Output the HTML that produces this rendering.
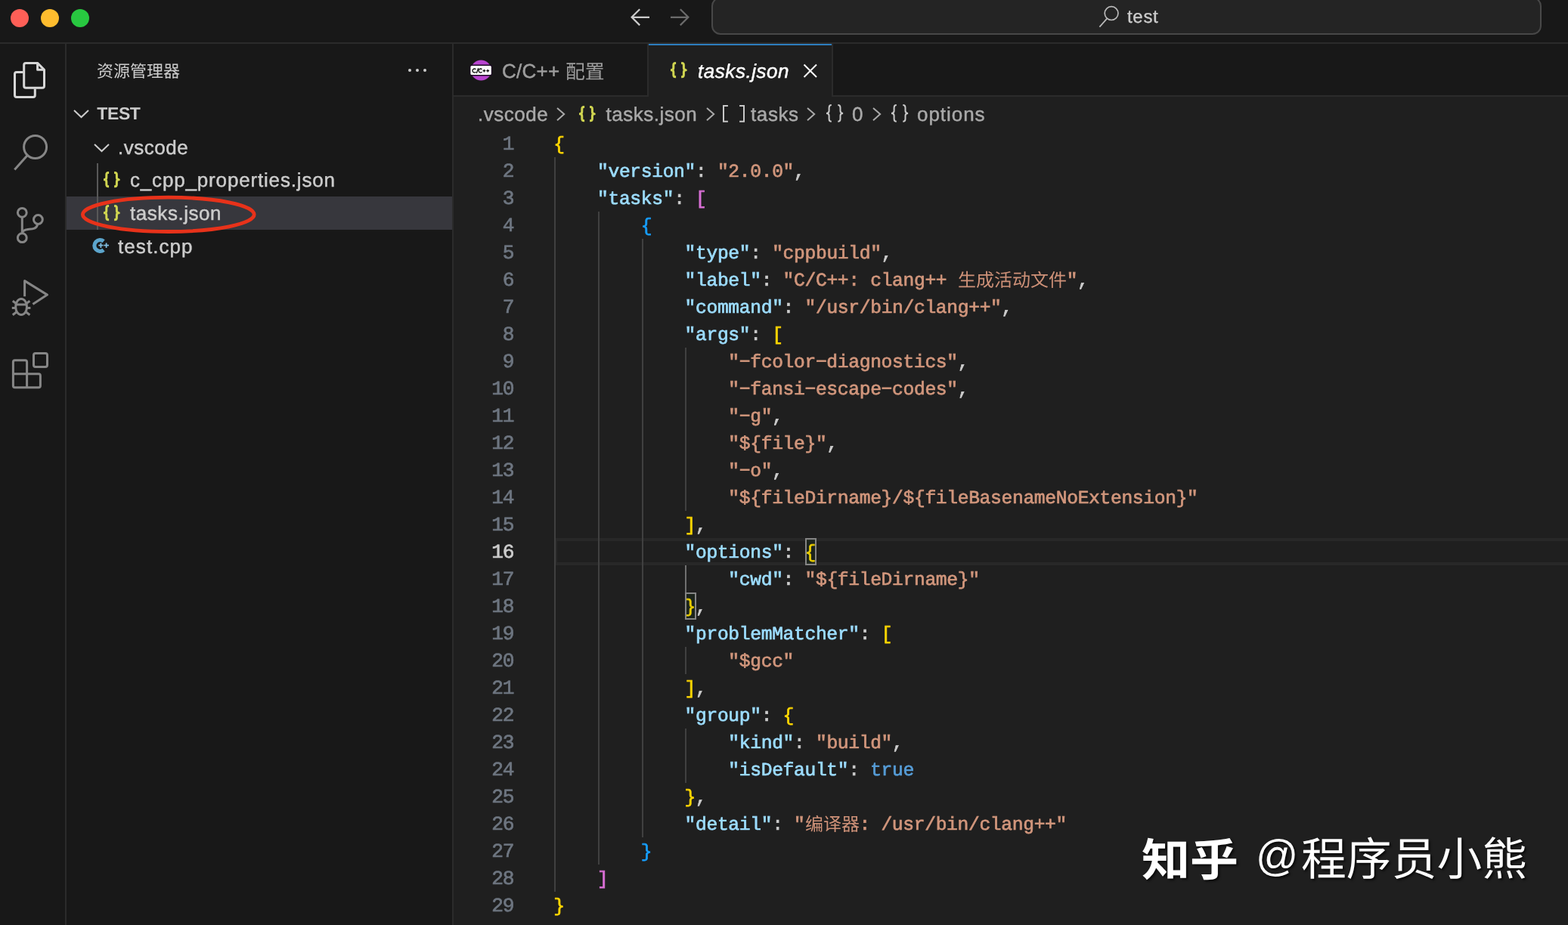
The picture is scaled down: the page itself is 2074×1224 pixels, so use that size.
<!DOCTYPE html>
<html><head><meta charset="utf-8"><title>tasks.json - test</title>
<style>
html,body{margin:0;padding:0}
body{width:2074px;height:1224px;overflow:hidden;position:relative;background:#1f1f1f;font-family:"Liberation Sans",sans-serif;color:#ccc;text-rendering:geometricPrecision;-webkit-font-smoothing:antialiased}
.abs{position:absolute}
.t{position:absolute;white-space:pre;line-height:1}
.ui{font-family:"Liberation Sans",sans-serif;font-size:26px;color:#ccc;-webkit-text-stroke-width:0.45px}
.code{font-family:"Liberation Mono",monospace;font-size:24.6px;letter-spacing:-0.312px;-webkit-text-stroke-width:0.7px;margin-top:2.7px;line-height:36px;height:36px;white-space:pre;position:absolute;left:732.2px;color:#ccc}
.ln{font-family:"Liberation Mono",monospace;font-size:26.2px;letter-spacing:-1.27px;-webkit-text-stroke-width:0.7px;margin-top:0.8px;line-height:36px;height:36px;position:absolute;left:600px;width:79.1px;text-align:right;color:#6e7681}
.k{color:#9cdcfe}.s{color:#d1967c}.b{color:#569cd6}
.b1{color:#ffd700}.b2{color:#da70d6}.b3{color:#179fff}
.g{position:absolute;width:2px;background:#404040}
.ga{background:#707070}
</style></head><body>
<div id="root" style="position:absolute;left:0;top:0;width:2074px;height:1224px;overflow:hidden;will-change:transform">

<div class="abs" style="left:0;top:0;width:2074px;height:56px;background:#181818"></div>
<div class="abs" style="left:0;top:56px;width:2074px;height:2px;background:#2b2b2b"></div>
<div class="abs" style="left:14px;top:12px;width:24px;height:24px;border-radius:50%;background:#fe5f57"></div>
<div class="abs" style="left:54px;top:12px;width:24px;height:24px;border-radius:50%;background:#febc2e"></div>
<div class="abs" style="left:94px;top:12px;width:24px;height:24px;border-radius:50%;background:#28c840"></div>
<svg class="abs" style="left:830px;top:8px" width="90" height="30" viewBox="0 0 90 30" fill="none" stroke-width="2.2" stroke-linecap="butt" stroke-linejoin="miter"><path stroke="#cccccc" d="M29 14.8H6M16.2 4.2L5.6 14.8L16.2 25.4"/><path stroke="#6b6b6b" d="M57 14.8H80M69.8 4.2L80.4 14.8L69.8 25.4"/></svg>
<div class="abs" style="left:941px;top:-4px;width:1094px;height:46px;border:2px solid #484848;border-radius:12px;background:#242424"></div>
<svg class="abs" style="left:1450px;top:4px" width="34" height="36" viewBox="0 0 34 36" fill="none" stroke="#b9b9b9" stroke-width="1.7"><circle cx="20.1" cy="13.6" r="8.9"/><path d="M14.4 20.4L4.4 31.6"/></svg>
<div class="t" style="left:1491px;top:11px;font-size:24px;letter-spacing:0.7px;color:#ccc;-webkit-text-stroke-width:0.35px">test</div>
<div class="abs" style="left:0;top:58px;width:86px;height:1166px;background:#181818"></div>
<div class="abs" style="left:86px;top:58px;width:2px;height:1166px;background:#2b2b2b"></div>
<svg class="abs" style="left:0;top:58px" width="86" height="480" viewBox="0 58 86 480" fill="none" stroke-width="3" stroke-linejoin="round" stroke-linecap="butt"><g stroke="#d7d7d7"><path d="M49.6 83.4H34.2Q31.7 83.4 31.7 85.9V113.8Q31.7 116.3 34.2 116.3H56Q58.5 116.3 58.5 113.8V92.2Z"/><path d="M49.6 83.4V92.2H58.5"/><path d="M30.5 95.5H22Q19.5 95.5 19.5 98V126Q19.5 128.5 22 128.5H43.8Q46.3 128.5 46.3 126V117.5"/></g><g stroke="#868686"><circle cx="46.6" cy="194.5" r="15"/><path d="M36.3 205.4L19.3 224.6"/></g><g stroke="#868686"><circle cx="29.3" cy="281.3" r="5.9"/><circle cx="50.4" cy="290.5" r="5.9"/><circle cx="29.3" cy="314.7" r="5.9"/><path d="M29.3 287.2V308.8"/><path d="M49.8 296.4C48.5 303.5 42 303 37 303.4C32 303.8 29.6 306 29.3 308.8"/></g><g stroke="#868686"><path d="M32.6 392.3V371.6L62.5 390.1L43.4 402.6"/><ellipse cx="28.1" cy="406" rx="7.4" ry="10.6"/><path d="M20.9 403H35.3"/><path d="M16.8 398.3L21.6 401.8M15.8 407.5H20.8M16.8 416.7L21.6 413M39.4 398.3L34.6 401.8M40.4 407.5H35.4M39.4 416.7L34.6 413"/></g><g stroke="#868686"><rect x="44.5" y="467.5" width="18" height="18" rx="2.5"/><path d="M20 476.7H33.4Q35.6 476.7 35.6 479V494.7H51.2Q53.4 494.7 53.4 497V510.5Q53.4 512.7 51.2 512.7H19.6Q17.4 512.7 17.4 510.5V479Q17.4 476.7 19.6 476.7Z"/><path d="M35.6 494.7V512.7M17.4 494.7H35.6"/></g></svg>
<div class="abs" style="left:88px;top:58px;width:510px;height:1166px;background:#181818"></div>
<div class="abs" style="left:598px;top:58px;width:2px;height:1166px;background:#2b2b2b"></div>
<svg class="abs" style="left:128.4px;top:80.0px;" width="110.0" height="30.8" viewBox="0 -22.0 110.0 30.8"><text x="0" y="0" font-size="22" fill="#cccccc" font-family="'Liberation Sans','Noto Sans CJK SC',sans-serif">资源管理器</text></svg>
<div class="abs" style="left:539.8px;top:90.6px;width:4.4px;height:4.4px;border-radius:50%;background:#ccc"></div>
<div class="abs" style="left:549.8px;top:90.6px;width:4.4px;height:4.4px;border-radius:50%;background:#ccc"></div>
<div class="abs" style="left:559.8px;top:90.6px;width:4.4px;height:4.4px;border-radius:50%;background:#ccc"></div>
<div class="abs" style="left:88px;top:260px;width:510px;height:44px;background:#37373d"></div>
<svg class="abs" style="left:96.4px;top:144.4px" width="23" height="13" viewBox="-2 -2 23 13" fill="none" stroke="#cccccc" stroke-width="2"><path d="M0 0L9.5 9L19 0"/></svg>
<svg class="abs" style="left:122.6px;top:188.5px" width="23" height="13" viewBox="-2 -2 23 13" fill="none" stroke="#cccccc" stroke-width="2"><path d="M0 0L9.5 9L19 0"/></svg>
<div class="t" style="left:128.3px;top:138.9px;font-size:23px;font-weight:bold;letter-spacing:-0.4px;color:#ccc">TEST</div>
<div class="t ui" style="left:156px;top:181.5px;letter-spacing:0.5px">.vscode</div>
<div class="abs" style="left:128px;top:216px;width:2px;height:88px;background:#585858"></div>
<svg class="abs" style="left:136.9px;top:226.7px" width="22" height="22" viewBox="0 0 22 22" fill="none" stroke="#cfd450" stroke-width="3.0" stroke-linejoin="round"><path d="M7.1 1.5H6.3C4.4 1.5 3.8 2.6 3.8 4.2V7.8C3.8 9.6 2.8 10.65 0.9 10.65C2.8 10.65 3.8 11.7 3.8 13.5V17.1C3.8 18.7 4.4 19.8 6.3 19.8H7.1"/><path transform="translate(21.2 0) scale(-1 1)" d="M7.1 1.5H6.3C4.4 1.5 3.8 2.6 3.8 4.2V7.8C3.8 9.6 2.8 10.65 0.9 10.65C2.8 10.65 3.8 11.7 3.8 13.5V17.1C3.8 18.7 4.4 19.8 6.3 19.8H7.1"/></svg>
<div class="t ui" style="left:172px;top:225px;letter-spacing:0.83px">c_cpp_properties.json</div>
<svg class="abs" style="left:136.9px;top:270.7px" width="22" height="22" viewBox="0 0 22 22" fill="none" stroke="#cfd450" stroke-width="3.0" stroke-linejoin="round"><path d="M7.1 1.5H6.3C4.4 1.5 3.8 2.6 3.8 4.2V7.8C3.8 9.6 2.8 10.65 0.9 10.65C2.8 10.65 3.8 11.7 3.8 13.5V17.1C3.8 18.7 4.4 19.8 6.3 19.8H7.1"/><path transform="translate(21.2 0) scale(-1 1)" d="M7.1 1.5H6.3C4.4 1.5 3.8 2.6 3.8 4.2V7.8C3.8 9.6 2.8 10.65 0.9 10.65C2.8 10.65 3.8 11.7 3.8 13.5V17.1C3.8 18.7 4.4 19.8 6.3 19.8H7.1"/></svg>
<div class="t ui" style="left:172px;top:269px;letter-spacing:0.55px">tasks.json</div>
<div class="t ui" style="left:156px;top:313px;letter-spacing:1.07px">test.cpp</div>
<svg class="abs" style="left:118px;top:311px" width="30" height="28" viewBox="118 311 30 28" fill="none"><path d="M137.1 319.3A7.45 7.45 0 1 0 137.1 330.7" stroke="#5ca5cc" stroke-width="5.1"/><path d="M130.3 324.7H136.5M133.4 321.4V328M137.3 324.7H144M140.6 321.4V328" stroke="#7fbde0" stroke-width="1.8"/></svg>
<svg class="abs" style="left:100px;top:254px" width="246" height="60" viewBox="100 254 246 60" fill="none"><ellipse cx="222.8" cy="283.85" rx="113.4" ry="22.65" stroke="#e8321a" stroke-width="4.8"/></svg>
<div class="abs" style="left:600px;top:58px;width:1474px;height:68px;background:#181818"></div>
<div class="abs" style="left:600px;top:126px;width:1474px;height:2px;background:#2b2b2b"></div>
<div class="abs" style="left:856px;top:58px;width:2px;height:68px;background:#2b2b2b"></div>
<div class="abs" style="left:858px;top:58px;width:242px;height:70px;background:#1f1f1f"></div>
<div class="abs" style="left:858px;top:58px;width:242px;height:2px;background:#2d7dbd"></div>
<div class="abs" style="left:1100px;top:58px;width:2px;height:68px;background:#2b2b2b"></div>
<svg class="abs" style="left:618px;top:76px" width="36" height="34" viewBox="618 76 36 34"><circle cx="636.3" cy="93" r="13.6" fill="#b845d0"/><rect x="621.4" y="85.5" width="29.4" height="15" rx="2.2" fill="#1c0a24"/><rect x="622.4" y="86.9" width="27.4" height="12.1" rx="1.6" fill="#ffffff"/><path fill="none" stroke="#111" stroke-width="1.35" d="M629.4 91.7A2.55 2.55 0 1 0 629.4 95.3M632.7 90.1L630.3 97M637.5 91.7A2.55 2.55 0 1 0 637.5 95.3M638.5 93.6H642.3M640.4 91.7V95.5M643.3 93.6H647.1M645.2 91.7V95.5"/></svg>
<div class="t ui" style="left:664px;top:81px;color:#9d9d9d;letter-spacing:0.25px">C/C++</div>
<svg class="abs" style="left:748px;top:77.8px;" width="51.6" height="36.1" viewBox="0 -25.8 51.6 36.1"><text x="0" y="0" font-size="25.8" fill="#9d9d9d" font-family="'Liberation Sans','Noto Sans CJK SC',sans-serif">配置</text></svg>
<svg class="abs" style="left:886.9px;top:82.1px" width="22" height="22" viewBox="0 0 22 22" fill="none" stroke="#cfd450" stroke-width="3.0" stroke-linejoin="round"><path d="M7.1 1.5H6.3C4.4 1.5 3.8 2.6 3.8 4.2V7.8C3.8 9.6 2.8 10.65 0.9 10.65C2.8 10.65 3.8 11.7 3.8 13.5V17.1C3.8 18.7 4.4 19.8 6.3 19.8H7.1"/><path transform="translate(21.2 0) scale(-1 1)" d="M7.1 1.5H6.3C4.4 1.5 3.8 2.6 3.8 4.2V7.8C3.8 9.6 2.8 10.65 0.9 10.65C2.8 10.65 3.8 11.7 3.8 13.5V17.1C3.8 18.7 4.4 19.8 6.3 19.8H7.1"/></svg>
<div class="t ui" style="left:923px;top:81px;color:#fff;font-style:italic;letter-spacing:0.55px">tasks.json</div>
<svg class="abs" style="left:1060px;top:82px" width="24" height="24" viewBox="0 0 24 24" fill="none" stroke="#fff" stroke-width="2"><path d="M3.5 3.5L20 20M20 3.5L3.5 20"/></svg>
<div class="t ui" style="left:632px;top:137.5px;color:#a9a9a9;letter-spacing:0.5px">.vscode</div>
<svg class="abs" style="left:735.1999999999999px;top:140.70000000000002px" width="13.2" height="20.2" viewBox="-2 -2 13.2 20.2" fill="none" stroke="#a9a9a9" stroke-width="2"><path d="M0 0L9.2 8.1L0 16.2"/></svg>
<svg class="abs" style="left:766px;top:140.1px" width="22" height="22" viewBox="0 0 22 22" fill="none" stroke="#cfd450" stroke-width="3.0" stroke-linejoin="round"><path d="M7.1 1.5H6.3C4.4 1.5 3.8 2.6 3.8 4.2V7.8C3.8 9.6 2.8 10.65 0.9 10.65C2.8 10.65 3.8 11.7 3.8 13.5V17.1C3.8 18.7 4.4 19.8 6.3 19.8H7.1"/><path transform="translate(21.2 0) scale(-1 1)" d="M7.1 1.5H6.3C4.4 1.5 3.8 2.6 3.8 4.2V7.8C3.8 9.6 2.8 10.65 0.9 10.65C2.8 10.65 3.8 11.7 3.8 13.5V17.1C3.8 18.7 4.4 19.8 6.3 19.8H7.1"/></svg>
<div class="t ui" style="left:801.5px;top:137.5px;color:#a9a9a9;letter-spacing:0.5px">tasks.json</div>
<svg class="abs" style="left:932.5px;top:140.70000000000002px" width="13.2" height="20.2" viewBox="-2 -2 13.2 20.2" fill="none" stroke="#a9a9a9" stroke-width="2"><path d="M0 0L9.2 8.1L0 16.2"/></svg>
<svg class="abs" style="left:955.7px;top:138.5px" width="30" height="24" viewBox="0 0 30 24" fill="none" stroke="#c8c8c8" stroke-width="2"><path d="M6.9 1H1V21.7H6.9M22.1 1H28V21.7H22.1"/></svg>
<div class="t ui" style="left:993px;top:137.5px;color:#a9a9a9;letter-spacing:0.6px">tasks</div>
<svg class="abs" style="left:1066.1000000000001px;top:140.70000000000002px" width="13.2" height="20.2" viewBox="-2 -2 13.2 20.2" fill="none" stroke="#a9a9a9" stroke-width="2"><path d="M0 0L9.2 8.1L0 16.2"/></svg>
<svg class="abs" style="left:1092.1px;top:138.1px" width="26" height="24" viewBox="0 0 26 24" fill="none" stroke="#c8c8c8" stroke-width="2"><path d="M7.8 1C5.2 1 4.6 2.2 4.6 4.4V8.8C4.6 10.8 3.4 11.9 1 11.9C3.4 11.9 4.6 13 4.6 15V19.4C4.6 21.6 5.2 22.8 7.8 22.8"/><path transform="translate(24.1 0) scale(-1 1)" d="M7.8 1C5.2 1 4.6 2.2 4.6 4.4V8.8C4.6 10.8 3.4 11.9 1 11.9C3.4 11.9 4.6 13 4.6 15V19.4C4.6 21.6 5.2 22.8 7.8 22.8"/></svg>
<div class="t ui" style="left:1127px;top:137.5px;color:#a9a9a9;">0</div>
<svg class="abs" style="left:1152.7px;top:140.70000000000002px" width="13.2" height="20.2" viewBox="-2 -2 13.2 20.2" fill="none" stroke="#a9a9a9" stroke-width="2"><path d="M0 0L9.2 8.1L0 16.2"/></svg>
<svg class="abs" style="left:1178px;top:138.1px" width="26" height="24" viewBox="0 0 26 24" fill="none" stroke="#c8c8c8" stroke-width="2"><path d="M7.8 1C5.2 1 4.6 2.2 4.6 4.4V8.8C4.6 10.8 3.4 11.9 1 11.9C3.4 11.9 4.6 13 4.6 15V19.4C4.6 21.6 5.2 22.8 7.8 22.8"/><path transform="translate(24.1 0) scale(-1 1)" d="M7.8 1C5.2 1 4.6 2.2 4.6 4.4V8.8C4.6 10.8 3.4 11.9 1 11.9C3.4 11.9 4.6 13 4.6 15V19.4C4.6 21.6 5.2 22.8 7.8 22.8"/></svg>
<div class="t ui" style="left:1213px;top:137.5px;color:#a9a9a9;letter-spacing:0.95px">options</div>
<div class="abs" style="left:733px;top:712px;width:1341px;height:28px;border:4px solid #282828;border-right:none"></div>
<div class="ln" style="top:172px">1</div>
<div class="code" style="top:172px"><span class="b1">{</span></div>
<div class="ln" style="top:208px">2</div>
<div class="g" style="left:733.0px;top:208px;height:36px"></div>
<div class="code" style="top:208px">    <span class="k">&quot;version&quot;</span>: <span class="s">&quot;2.0.0&quot;</span>,</div>
<div class="ln" style="top:244px">3</div>
<div class="g" style="left:733.0px;top:244px;height:36px"></div>
<div class="code" style="top:244px">    <span class="k">&quot;tasks&quot;</span>: <span class="b2">[</span></div>
<div class="ln" style="top:280px">4</div>
<div class="g" style="left:733.0px;top:280px;height:36px"></div>
<div class="g" style="left:790.8px;top:280px;height:36px"></div>
<div class="code" style="top:280px">        <span class="b3">{</span></div>
<div class="ln" style="top:316px">5</div>
<div class="g" style="left:733.0px;top:316px;height:36px"></div>
<div class="g" style="left:790.8px;top:316px;height:36px"></div>
<div class="g" style="left:848.6px;top:316px;height:36px"></div>
<div class="code" style="top:316px">            <span class="k">&quot;type&quot;</span>: <span class="s">&quot;cppbuild&quot;</span>,</div>
<div class="ln" style="top:352px">6</div>
<div class="g" style="left:733.0px;top:352px;height:36px"></div>
<div class="g" style="left:790.8px;top:352px;height:36px"></div>
<div class="g" style="left:848.6px;top:352px;height:36px"></div>
<div class="code" style="top:352px">            <span class="k">&quot;label&quot;</span>: <span class="s">&quot;C/C++: clang++ </span><span style="display:inline-block;width:144px"></span><span class="s">&quot;</span>,</div>
<div class="ln" style="top:388px">7</div>
<div class="g" style="left:733.0px;top:388px;height:36px"></div>
<div class="g" style="left:790.8px;top:388px;height:36px"></div>
<div class="g" style="left:848.6px;top:388px;height:36px"></div>
<div class="code" style="top:388px">            <span class="k">&quot;command&quot;</span>: <span class="s">&quot;/usr/bin/clang++&quot;</span>,</div>
<div class="ln" style="top:424px">8</div>
<div class="g" style="left:733.0px;top:424px;height:36px"></div>
<div class="g" style="left:790.8px;top:424px;height:36px"></div>
<div class="g" style="left:848.6px;top:424px;height:36px"></div>
<div class="code" style="top:424px">            <span class="k">&quot;args&quot;</span>: <span class="b1">[</span></div>
<div class="ln" style="top:460px">9</div>
<div class="g" style="left:733.0px;top:460px;height:36px"></div>
<div class="g" style="left:790.8px;top:460px;height:36px"></div>
<div class="g" style="left:848.6px;top:460px;height:36px"></div>
<div class="g" style="left:906.4px;top:460px;height:36px"></div>
<div class="code" style="top:460px">                <span class="s">&quot;−fcolor−diagnostics&quot;</span>,</div>
<div class="ln" style="top:496px">10</div>
<div class="g" style="left:733.0px;top:496px;height:36px"></div>
<div class="g" style="left:790.8px;top:496px;height:36px"></div>
<div class="g" style="left:848.6px;top:496px;height:36px"></div>
<div class="g" style="left:906.4px;top:496px;height:36px"></div>
<div class="code" style="top:496px">                <span class="s">&quot;−fansi−escape−codes&quot;</span>,</div>
<div class="ln" style="top:532px">11</div>
<div class="g" style="left:733.0px;top:532px;height:36px"></div>
<div class="g" style="left:790.8px;top:532px;height:36px"></div>
<div class="g" style="left:848.6px;top:532px;height:36px"></div>
<div class="g" style="left:906.4px;top:532px;height:36px"></div>
<div class="code" style="top:532px">                <span class="s">&quot;−g&quot;</span>,</div>
<div class="ln" style="top:568px">12</div>
<div class="g" style="left:733.0px;top:568px;height:36px"></div>
<div class="g" style="left:790.8px;top:568px;height:36px"></div>
<div class="g" style="left:848.6px;top:568px;height:36px"></div>
<div class="g" style="left:906.4px;top:568px;height:36px"></div>
<div class="code" style="top:568px">                <span class="s">&quot;${file}&quot;</span>,</div>
<div class="ln" style="top:604px">13</div>
<div class="g" style="left:733.0px;top:604px;height:36px"></div>
<div class="g" style="left:790.8px;top:604px;height:36px"></div>
<div class="g" style="left:848.6px;top:604px;height:36px"></div>
<div class="g" style="left:906.4px;top:604px;height:36px"></div>
<div class="code" style="top:604px">                <span class="s">&quot;−o&quot;</span>,</div>
<div class="ln" style="top:640px">14</div>
<div class="g" style="left:733.0px;top:640px;height:36px"></div>
<div class="g" style="left:790.8px;top:640px;height:36px"></div>
<div class="g" style="left:848.6px;top:640px;height:36px"></div>
<div class="g" style="left:906.4px;top:640px;height:36px"></div>
<div class="code" style="top:640px">                <span class="s">&quot;${fileDirname}/${fileBasenameNoExtension}&quot;</span></div>
<div class="ln" style="top:676px">15</div>
<div class="g" style="left:733.0px;top:676px;height:36px"></div>
<div class="g" style="left:790.8px;top:676px;height:36px"></div>
<div class="g" style="left:848.6px;top:676px;height:36px"></div>
<div class="code" style="top:676px">            <span class="b1">]</span>,</div>
<div class="ln" style="top:712px;color:#cccccc">16</div>
<div class="g" style="left:733.0px;top:712px;height:36px"></div>
<div class="g" style="left:790.8px;top:712px;height:36px"></div>
<div class="g" style="left:848.6px;top:712px;height:36px"></div>
<div class="code" style="top:712px">            <span class="k">&quot;options&quot;</span>: <span class="b1">{</span></div>
<div class="ln" style="top:748px">17</div>
<div class="g" style="left:733.0px;top:748px;height:36px"></div>
<div class="g" style="left:790.8px;top:748px;height:36px"></div>
<div class="g" style="left:848.6px;top:748px;height:36px"></div>
<div class="g ga" style="left:906.4px;top:748px;height:36px"></div>
<div class="code" style="top:748px">                <span class="k">&quot;cwd&quot;</span>: <span class="s">&quot;${fileDirname}&quot;</span></div>
<div class="ln" style="top:784px">18</div>
<div class="g" style="left:733.0px;top:784px;height:36px"></div>
<div class="g" style="left:790.8px;top:784px;height:36px"></div>
<div class="g" style="left:848.6px;top:784px;height:36px"></div>
<div class="code" style="top:784px">            <span class="b1">}</span>,</div>
<div class="ln" style="top:820px">19</div>
<div class="g" style="left:733.0px;top:820px;height:36px"></div>
<div class="g" style="left:790.8px;top:820px;height:36px"></div>
<div class="g" style="left:848.6px;top:820px;height:36px"></div>
<div class="code" style="top:820px">            <span class="k">&quot;problemMatcher&quot;</span>: <span class="b1">[</span></div>
<div class="ln" style="top:856px">20</div>
<div class="g" style="left:733.0px;top:856px;height:36px"></div>
<div class="g" style="left:790.8px;top:856px;height:36px"></div>
<div class="g" style="left:848.6px;top:856px;height:36px"></div>
<div class="g" style="left:906.4px;top:856px;height:36px"></div>
<div class="code" style="top:856px">                <span class="s">&quot;$gcc&quot;</span></div>
<div class="ln" style="top:892px">21</div>
<div class="g" style="left:733.0px;top:892px;height:36px"></div>
<div class="g" style="left:790.8px;top:892px;height:36px"></div>
<div class="g" style="left:848.6px;top:892px;height:36px"></div>
<div class="code" style="top:892px">            <span class="b1">]</span>,</div>
<div class="ln" style="top:928px">22</div>
<div class="g" style="left:733.0px;top:928px;height:36px"></div>
<div class="g" style="left:790.8px;top:928px;height:36px"></div>
<div class="g" style="left:848.6px;top:928px;height:36px"></div>
<div class="code" style="top:928px">            <span class="k">&quot;group&quot;</span>: <span class="b1">{</span></div>
<div class="ln" style="top:964px">23</div>
<div class="g" style="left:733.0px;top:964px;height:36px"></div>
<div class="g" style="left:790.8px;top:964px;height:36px"></div>
<div class="g" style="left:848.6px;top:964px;height:36px"></div>
<div class="g" style="left:906.4px;top:964px;height:36px"></div>
<div class="code" style="top:964px">                <span class="k">&quot;kind&quot;</span>: <span class="s">&quot;build&quot;</span>,</div>
<div class="ln" style="top:1000px">24</div>
<div class="g" style="left:733.0px;top:1000px;height:36px"></div>
<div class="g" style="left:790.8px;top:1000px;height:36px"></div>
<div class="g" style="left:848.6px;top:1000px;height:36px"></div>
<div class="g" style="left:906.4px;top:1000px;height:36px"></div>
<div class="code" style="top:1000px">                <span class="k">&quot;isDefault&quot;</span>: <span class="b">true</span></div>
<div class="ln" style="top:1036px">25</div>
<div class="g" style="left:733.0px;top:1036px;height:36px"></div>
<div class="g" style="left:790.8px;top:1036px;height:36px"></div>
<div class="g" style="left:848.6px;top:1036px;height:36px"></div>
<div class="code" style="top:1036px">            <span class="b1">}</span>,</div>
<div class="ln" style="top:1072px">26</div>
<div class="g" style="left:733.0px;top:1072px;height:36px"></div>
<div class="g" style="left:790.8px;top:1072px;height:36px"></div>
<div class="g" style="left:848.6px;top:1072px;height:36px"></div>
<div class="code" style="top:1072px">            <span class="k">&quot;detail&quot;</span>: <span class="s">&quot;</span><span style="display:inline-block;width:72px"></span><span class="s">: /usr/bin/clang++&quot;</span></div>
<div class="ln" style="top:1108px">27</div>
<div class="g" style="left:733.0px;top:1108px;height:36px"></div>
<div class="g" style="left:790.8px;top:1108px;height:36px"></div>
<div class="code" style="top:1108px">        <span class="b3">}</span></div>
<div class="ln" style="top:1144px">28</div>
<div class="g" style="left:733.0px;top:1144px;height:36px"></div>
<div class="code" style="top:1144px">    <span class="b2">]</span></div>
<div class="ln" style="top:1180px">29</div>
<div class="code" style="top:1180px"><span class="b1">}</span></div>
<div class="abs" style="left:1064.8px;top:712px;width:10.8px;height:32px;border:2px solid #858585;background:rgba(0,100,0,0.08)"></div>
<div class="abs" style="left:905.8px;top:784px;width:10.8px;height:32px;border:2px solid #858585;background:rgba(0,100,0,0.08)"></div>
<svg class="abs" style="left:1266.8500000000001px;top:354.6px;" width="144.0" height="33.6" viewBox="0 -24 144.0 33.6"><text x="0" y="0" font-size="24" fill="#ce9178" font-family="'Liberation Sans','Noto Sans CJK SC',sans-serif">生成活动文件</text></svg>
<svg class="abs" style="left:1064.55px;top:1074.6px;" width="72.0" height="33.6" viewBox="0 -24 72.0 33.6"><text x="0" y="0" font-size="24" fill="#ce9178" font-family="'Liberation Sans','Noto Sans CJK SC',sans-serif">编译器</text></svg>
<svg class="abs" style="left:1509.5px;top:1094.5px;overflow:visible;filter:drop-shadow(2px 2px 1.5px rgba(0,0,0,0.75))" width="137.0" height="90.3" viewBox="0 -64.5 137.0 90.3"><text x="0" y="0" transform="scale(1.0 0.925)" font-size="64" font-weight="bold" fill="#ffffff" font-family="'Liberation Sans','Noto Sans CJK SC',sans-serif">知乎</text></svg>
<svg class="abs" style="left:1660.6px;top:1094.4px;overflow:visible;filter:drop-shadow(2px 2px 1.5px rgba(0,0,0,0.75))" width="63.8" height="81.2" viewBox="0 -58 63.8 81.2"><text x="0" y="0" transform="scale(0.99 1.035)" font-size="56" fill="#ffffff" font-family="'Liberation Sans','Noto Sans CJK SC',sans-serif">@</text></svg>
<svg class="abs" style="left:1721.2px;top:1098.0px;overflow:visible;filter:drop-shadow(2px 2px 1.5px rgba(0,0,0,0.75))" width="307.0" height="83.7" viewBox="0 -59.8 307.0 83.7"><text x="0" y="0" font-size="59.8" fill="#ffffff" font-family="'Liberation Sans','Noto Sans CJK SC',sans-serif">程序员小熊</text></svg>
</div></body></html>
